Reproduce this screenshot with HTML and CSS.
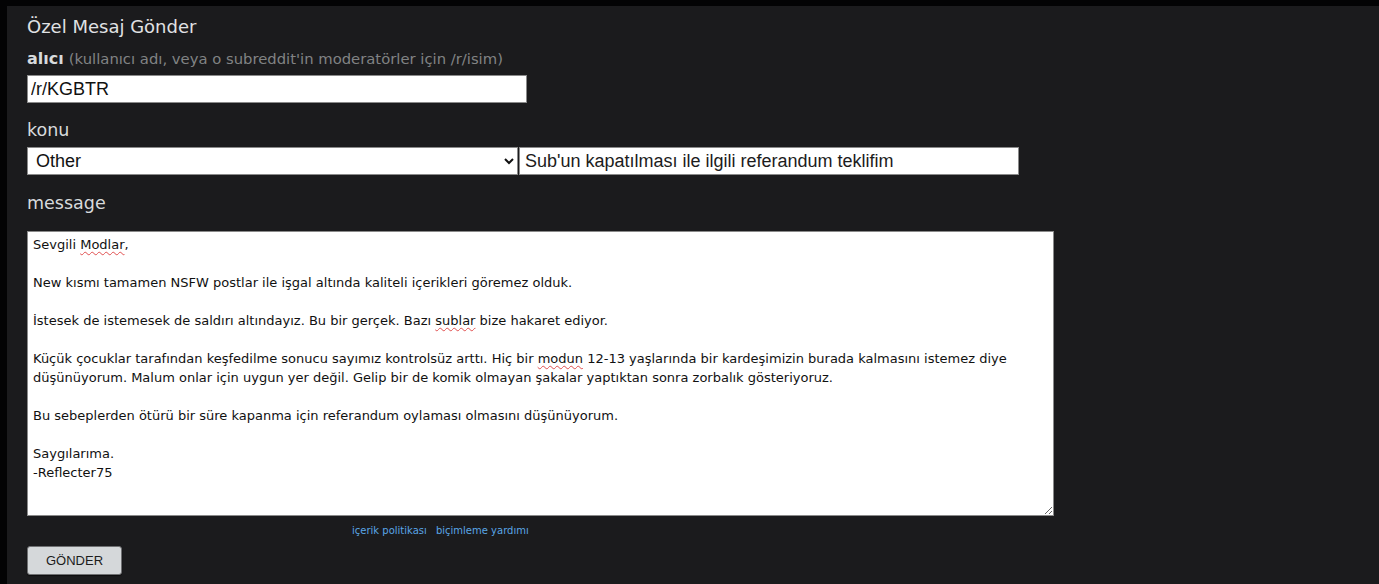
FILE: index.html
```html
<!DOCTYPE html>
<html lang="tr">
<head>
  <meta charset="UTF-8">
  <title>Özel Mesaj Gönder</title>
  <link rel="stylesheet" href="styles.css">
</head>
<body>
  <div class="page">
    <form class="compose">
      <h1>Özel Mesaj Gönder</h1>
      <!-- alıcı -->
      <div class="field-label label-to">
        <span class="label">alıcı</span>
        <span class="note">(kullanıcı adı, veya o subreddit'in moderatörler için /r/isim)</span>
      </div>
      <input type="text" class="to-input" value="/r/KGBTR">
      <!-- konu -->
      <div class="field-label label-subject"><span class="label">konu</span></div>
      <div class="subject-row">
        <select class="subject-select">
          <option>Other</option>
        </select>
        <input type="text" class="subject-input" value="Sub'un kapatılması ile ilgili referandum teklifim">
      </div>
      <!-- message -->
      <div class="field-label label-message"><span class="label">message</span></div>
      <div class="message-box" contenteditable="true" spellcheck="false">Sevgili <span class="typo">Modlar</span>,

New kısmı tamamen NSFW postlar ile işgal altında kaliteli içerikleri göremez olduk.

İstesek de istemesek de saldırı altındayız. Bu bir gerçek. Bazı <span class="typo">sublar</span> bize hakaret ediyor.

Küçük çocuklar tarafından keşfedilme sonucu sayımız kontrolsüz arttı. Hiç bir <span class="typo">modun</span> 12-13 yaşlarında bir kardeşimizin burada kalmasını istemez diye düşünüyorum. Malum onlar için uygun yer değil. Gelip bir de komik olmayan şakalar yaptıktan sonra zorbalık gösteriyoruz.

Bu sebeplerden ötürü bir süre kapanma için referandum oylaması olmasını düşünüyorum.

Saygılarıma.
-Reflecter75</div>
      <div class="help-links">
        <a href="#">içerik politikası</a>
        <a href="#">biçimleme yardımı</a>
      </div>
      <button type="button" class="send">GÖNDER</button>
    </form>
  </div>
</body>
</html>
```

FILE: styles.css
```css
/* koyu tema, eski reddit mesaj formu */
html, body {
  margin: 0;
  height: 100%;
}
body {
  background-color: #030304;
  font-family: "DejaVu Sans", Verdana, sans-serif;
}
.page {
  margin: 6px 0 0 7px;
  min-height: 578px;
  background-color: #1b1b1d;
  padding: 10px 0 0 20px;
  box-sizing: border-box;
}
.compose {
  display: flex;
  flex-direction: column;
  align-items: flex-start;
}
h1 {
  margin: 0;
  font-size: 18px;
  line-height: 22px;
  font-weight: normal;
  color: #e0e2e4;
}
.field-label {
  line-height: 22px;
  color: #d7dadc;
}
.field-label .label {
  font-size: 17.5px;
}
.label-to .label {
  font-size: 16px;
  font-weight: bold;
}
.field-label .note {
  font-size: 14.8px;
  color: #818384;
}
.label-to {
  margin-top: 10px;
}
.label-subject {
  margin-top: 16px;
}
.label-message {
  margin-top: 17px;
}
.to-input,
.subject-input,
.subject-select {
  box-sizing: border-box;
  height: 28px;
  margin: 0;
  border: 1px solid #8a8a8a;
  background-color: #fff;
  color: #111;
  font-family: "Liberation Sans", Arial, sans-serif;
  font-size: 18px;
  padding: 0 3px;
  border-radius: 0;
  outline: none;
}
.to-input {
  width: 500px;
  margin-top: 5px;
}
.subject-row {
  display: flex;
  gap: 1px;
  margin-top: 5px;
}
.subject-select {
  width: 491px;
  padding-left: 4px;
}
.subject-input {
  width: 500px;
  padding-left: 5px;
  color: #1c1c1c;
}
.message-box {
  box-sizing: border-box;
  width: 1027px;
  height: 285px;
  margin-top: 16px;
  padding: 3px 5px;
  border: 1px solid #8a8a8a;
  background-color: #fff;
  color: #111;
  font-family: "DejaVu Sans", Verdana, sans-serif;
  font-size: 13px;
  line-height: 19px;
  white-space: pre-wrap;
  overflow: auto;
  resize: both;
  outline: none;
}
.typo {
  text-decoration: underline wavy #e05050;
  text-decoration-thickness: 1px;
  text-underline-offset: 2px;
}
.help-links {
  margin-top: 8px;
  padding-left: 325px;
  font-size: 10px;
  line-height: 14px;
}
.help-links a {
  color: #5aa6e6;
  text-decoration: none;
  margin-right: 6px;
}
.send {
  margin-top: 8px;
  width: 95px;
  height: 29px;
  border: 1px solid #6f7072;
  border-radius: 3px;
  background-color: #d5d8da;
  color: #1c1c1c;
  font-family: "Liberation Sans", Arial, sans-serif;
  font-size: 13px;
  padding: 0;
  box-shadow: 0 1px 1px rgba(0,0,0,0.5);
}
```
